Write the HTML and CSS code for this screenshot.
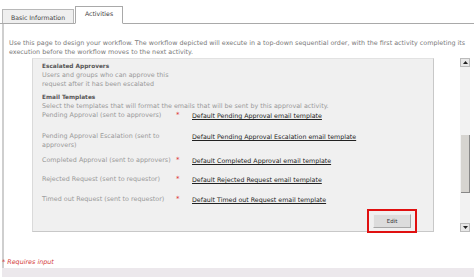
FILE: index.html
```html
<!DOCTYPE html>
<html>
<head>
<meta charset="utf-8">
<link rel="stylesheet" href="styles.css">
</head>
<body>
<div class="tabs">
  <div class="tab tab-off">Basic Information</div>
  <div class="tab tab-on">Activities</div>
</div>
<div class="main">
  <p class="desc">Use this page to design your workflow. The workflow depicted will execute in a top-down sequential order, with the first activity completing its execution before the workflow moves to the next activity.</p>
  <div class="work">
    <div class="panel">
      <div class="h">Escalated Approvers</div>
      <div class="note">Users and groups who can approve this<br>request after it has been escalated</div>
      <div class="h h2">Email Templates</div>
      <div class="note">Select the templates that will format the emails that will be sent by this approval activity.</div>
      <div class="grid">
        <div class="lbl">Pending Approval (sent to approvers)</div><div class="star">*</div><a class="lnk">Default Pending Approval email template</a>
        <div class="lbl">Pending Approval Escalation (sent to approvers)</div><div class="star"></div><a class="lnk">Default Pending Approval Escalation email template</a>
        <div class="lbl">Completed Approval (sent to approvers)</div><div class="star">*</div><a class="lnk">Default Completed Approval email template</a>
        <div class="lbl">Rejected Request (sent to requestor)</div><div class="star">*</div><a class="lnk">Default Rejected Request email template</a>
        <div class="lbl">Timed out Request (sent to requestor)</div><div class="star">*</div><a class="lnk">Default Timed out Request email template</a>
      </div>
      <div class="actions"><div class="hl"><div class="btn">Edit</div></div></div>
    </div>
    <div class="sb">
      <div class="arr"><svg width="5" height="3" viewBox="0 0 5 3"><path d="M0 3 L2.5 0 L5 3Z" fill="#222"/></svg></div>
      <div class="track"><div class="thumb"></div></div>
      <div class="arr"><svg width="5" height="3" viewBox="0 0 5 3"><path d="M0 0 L2.5 3 L5 0Z" fill="#222"/></svg></div>
    </div>
  </div>
  <div class="req">* Requires input</div>
</div>
<div class="bottom"></div>
</body>
</html>
```
FILE: styles.css
```css
html, body { margin: 0; padding: 0; }
body {
  width: 474px; height: 277px; overflow: hidden; background: #fff;
  font-family: "DejaVu Sans", Verdana, sans-serif; font-size: 6.4px; color: #888;
}
.tabs {
  display: flex; align-items: flex-end; padding: 0 0 0 2px;
  border-bottom: 1px solid #a9a9a9; height: 24px; box-sizing: border-box;
}
.tab { box-sizing: border-box; display: flex; align-items: center; justify-content: center; color: #444; font-size: 6.2px; }
.tab-off { width: 72px; height: 14px; background: #efefef; border: 1px solid #b8b8b8; border-bottom: none; padding-top: 1px; }
.tab-on { width: 48px; height: 18px; background: #fff; border: 1px solid #a9a9a9; border-bottom: 1px solid #fff; margin-bottom: -1px; margin-left: 1px; padding-bottom: 3px; }
.main {
  margin-left: 2px; border-left: 2px solid #cfcfcf; height: 244px; box-sizing: border-box;
  display: flex; flex-direction: column;
}
.desc { margin: 15px 0 0 5px; line-height: 9px; color: #7a7a7a; }
.work { display: flex; margin-top: 1px; }
.panel {
  margin-left: 28px; width: 402px; height: 174px; box-sizing: border-box;
  background: #f0f0f0; border: 1px solid #c8c8c8; border-top-color: #e2e2e2; border-left-color: #dadada;
  padding: 3px 0 0 9px; display: flex; flex-direction: column;
}
.h { font-weight: bold; color: #555; line-height: 9px; font-size: 5.8px; }
.h2 { margin-top: 4px; }
.note { color: #999; line-height: 9px; }
.grid {
  display: grid; grid-template-columns: 134px 16px auto;
  grid-template-rows: 21px 24px 19px 20px 13px;
  line-height: 9px; align-items: start;
}
.lbl { color: #999; }
.lbl.wrap { width: 128px; }
.star { color: #d33; font-size: 7px; }
.lnk { color: #222; text-decoration: underline; font-size: 6.3px; }
.actions { display: flex; justify-content: flex-end; margin-top: auto; padding: 0 16px 0 0; margin-bottom: -2px; }
.hl { border: 2px solid #e01010; padding: 3px 4px; }
.btn {
  width: 38px; height: 14px; box-sizing: border-box; background: #dcdcdc;
  border: 1px solid #a8a8a8; border-top-color: #eee; border-left-color: #eee;
  display: flex; align-items: center; justify-content: center; color: #333; font-size: 5.5px;
}
.sb { margin-left: 26px; width: 10px; height: 174px; display: flex; flex-direction: column; background: #f4f4f4; }
.arr {
  height: 9px; display: flex; align-items: center; justify-content: center;
  background: #e8e8e8; border: 1px solid #bbb; box-sizing: border-box;
}
.track { flex: 1; position: relative; background: #f2f2f2; }
.thumb {
  position: absolute; left: 1px; right: 0; top: 68px; height: 58px;
  background: #d6d4d0; border-right: 1px solid #888; border-bottom: 1px solid #888; box-sizing: border-box;
}
.req { margin-top: auto; color: #d43a3a; font-style: italic; padding: 0 0 2px 0; margin-left: -2px; line-height: 8px; }
.bottom { height: 9px; background: #ece8ec; margin-left: 2px; }
```
